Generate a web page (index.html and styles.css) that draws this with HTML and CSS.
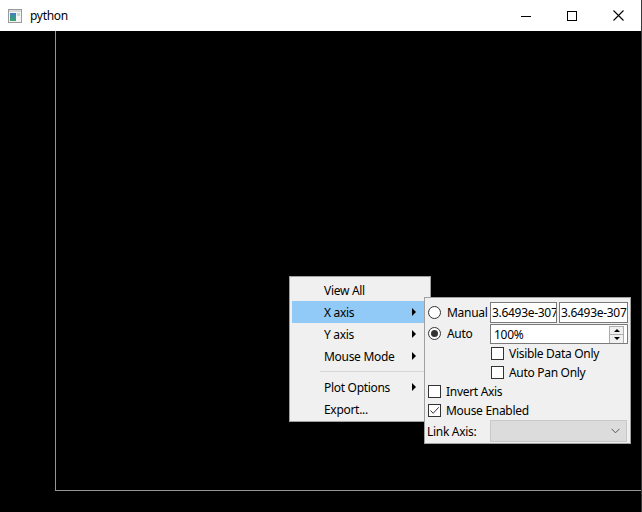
FILE: index.html
```html
<!DOCTYPE html>
<html lang="en">
<head>
  <meta charset="UTF-8">
  <title>python</title>
  <link rel="stylesheet" href="styles.css">
</head>
<body>
  <div class="window">
    <div class="titlebar">
      <svg class="app-icon" width="14" height="14" viewBox="0 0 14 14">
        <rect x="0.5" y="0.5" width="13" height="13" fill="#f4f4f4" stroke="#9a9a9a"/>
        <rect x="1" y="1" width="12" height="2" fill="#d8d8d8"/>
        <defs>
          <linearGradient id="g" x1="0" y1="0" x2="0" y2="1">
            <stop offset="0" stop-color="#3f7fc0"/>
            <stop offset="1" stop-color="#3aa56a"/>
          </linearGradient>
        </defs>
        <rect x="2" y="4" width="6" height="8" fill="url(#g)"/>
        <rect x="9" y="4" width="3" height="3" fill="#bfe0c8"/>
      </svg>
      <span class="title">python</span>
      <div class="controls">
        <div class="ctl"><svg width="10" height="10" viewBox="0 0 10 10"><path d="M0 5.5H10" stroke="#000" stroke-width="1"/></svg></div>
        <div class="ctl"><svg width="10" height="10" viewBox="0 0 10 10"><rect x="0.5" y="0.5" width="9" height="9" fill="none" stroke="#000"/></svg></div>
        <div class="ctl"><svg width="11" height="11" viewBox="0 0 11 11"><path d="M0.5 0.5L10.5 10.5M10.5 0.5L0.5 10.5" stroke="#000" stroke-width="1.1"/></svg></div>
      </div>
    </div>

    <div class="content">
      <div class="plot"></div>

      <!-- context menu -->
      <div class="menu">
        <div class="item">View All</div>
        <div class="item active">X axis<span class="arrow"></span></div>
        <div class="item">Y axis<span class="arrow"></span></div>
        <div class="item">Mouse Mode<span class="arrow"></span></div>
        <div class="sep"></div>
        <div class="item">Plot Options<span class="arrow"></span></div>
        <div class="item">Export...</div>
      </div>

      <!-- X axis sub panel -->
      <div class="sub">
        <div class="row r-manual">
          <label class="lead"><span class="radio"></span>Manual</label>
          <div class="field w1">3.6493e-307</div>
          <div class="field w2">3.6493e-307</div>
        </div>
        <div class="row r-auto">
          <label class="lead"><span class="radio on"></span>Auto</label>
          <div class="field spin">100%
            <div class="spin-btns">
              <span class="up"></span>
              <span class="down"></span>
            </div>
          </div>
        </div>
        <div class="row check indent"><span class="box"></span>Visible Data Only</div>
        <div class="row check indent"><span class="box"></span>Auto Pan Only</div>
        <div class="row check"><span class="box"></span>Invert Axis</div>
        <div class="row check"><span class="box on">
          <svg width="11" height="11" viewBox="0 0 11 11"><path d="M1.5 5.5L4.2 8.3L9.7 2.3" fill="none" stroke="#333" stroke-width="1"/></svg>
        </span>Mouse Enabled</div>
        <div class="row r-link">
          <span class="lead">Link Axis:</span>
          <div class="combo">
            <svg width="9" height="6" viewBox="0 0 9 6"><path d="M0.5 0.8L4.5 4.8L8.5 0.8" fill="none" stroke="#555" stroke-width="1"/></svg>
          </div>
        </div>
      </div>
    </div>
  </div>
</body>
</html>
```

FILE: styles.css
```css
html, body {
  margin: 0;
  padding: 0;
  background: #000;
}
body {
  width: 642px;
  height: 512px;
  overflow: hidden;
  font-family: "Noto Sans", "Open Sans", sans-serif;
  font-size: 12px;
  letter-spacing: -0.3px;
  color: #000;
}
.window {
  width: 642px;
  height: 512px;
  display: flex;
  flex-direction: column;
  box-sizing: border-box;
  border-right: 1px solid #3a3a3a;
}
.titlebar {
  height: 31px;
  flex: none;
  background: #fff;
  display: flex;
  align-items: center;
}
.app-icon {
  margin-left: 8px;
}
.title {
  margin-left: 8px;
  font-size: 12px;
  line-height: 31px;
}
.controls {
  margin-left: auto;
  display: flex;
  height: 31px;
}
.ctl {
  width: 46px;
  height: 31px;
  display: flex;
  align-items: center;
  justify-content: center;
}
.content {
  flex: 1;
  position: relative;
  background: #000;
}
.plot {
  margin-left: 55px;
  height: 459px;
  border-left: 1px solid #969696;
  border-bottom: 1px solid #969696;
}

/* popup menu */
.menu {
  position: absolute;
  left: 289px;
  top: 245px;
  width: 142px;
  box-sizing: border-box;
  background: #f0f0f0;
  border: 1px solid #a0a0a0;
  padding: 2px 2px 1px 2px;
}
.item {
  position: relative;
  height: 21px;
  line-height: 22px;
  padding: 1px 0 0 32px;
}
.item.active {
  background: #91c9f7;
}
.arrow {
  position: absolute;
  left: 120px;
  top: 7px;
  width: 0;
  height: 0;
  border-left: 4px solid #000;
  border-top: 4px solid transparent;
  border-bottom: 4px solid transparent;
}
.sep {
  height: 1px;
  background: #d7d7d7;
  margin: 4px 1px 4px 28px;
}

/* X axis panel */
.sub {
  position: absolute;
  left: 424px;
  top: 266px;
  width: 207px;
  box-sizing: border-box;
  background: #f0f0f0;
  border: 1px solid #a0a0a0;
  padding: 3px 2px 1px 2px;
}
.row {
  display: flex;
  align-items: center;
}
.lead {
  width: 63px;
  flex: none;
  display: flex;
  align-items: center;
}
.r-manual {
  height: 22px;
}
.r-auto {
  height: 21px;
}
.field {
  height: 21px;
  box-sizing: border-box;
  background: #fff;
  border: 1px solid #7a7a7a;
  line-height: 19px;
  padding-left: 1px;
  white-space: nowrap;
  overflow: hidden;
  font-size: 12px;
}
.w1 {
  width: 67px;
}
.w2 {
  width: 69px;
  margin-left: 2px;
}
.spin {
  width: 138px;
  height: 20px;
  position: relative;
  padding-left: 3px;
}
.spin-btns {
  position: absolute;
  right: 3px;
  top: 1px;
  width: 13px;
  height: 16px;
  border: 1px solid #adadad;
  background: #f0f0f0;
  display: flex;
  flex-direction: column;
}
.spin-btns span {
  flex: 1;
  display: flex;
  align-items: center;
  justify-content: center;
}
.spin-btns .up {
  border-bottom: 1px solid #adadad;
}
.spin-btns .up::after {
  content: "";
  border-left: 3px solid transparent;
  border-right: 3px solid transparent;
  border-bottom: 3px solid #000;
}
.spin-btns .down::after {
  content: "";
  border-left: 3px solid transparent;
  border-right: 3px solid transparent;
  border-top: 3px solid #000;
}
.radio {
  width: 13px;
  height: 13px;
  box-sizing: border-box;
  border: 1px solid #333;
  border-radius: 50%;
  background: #fff;
  margin: 0 6px 0 1px;
  display: flex;
  align-items: center;
  justify-content: center;
}
.radio.on::after {
  content: "";
  width: 7px;
  height: 7px;
  border-radius: 50%;
  background: #333;
}
.check {
  height: 19px;
}
.indent {
  padding-left: 63px;
}
.box {
  width: 13px;
  height: 13px;
  box-sizing: border-box;
  border: 1px solid #333;
  background: #fff;
  margin: 0 5px 0 1px;
  display: flex;
  align-items: center;
  justify-content: center;
}
.r-link {
  height: 22px;
}
.combo {
  width: 137px;
  height: 22px;
  box-sizing: border-box;
  border: 1px solid #c8c8c8;
  background: #dcdcdc;
  display: flex;
  align-items: center;
  justify-content: flex-end;
  padding-right: 6px;
}
```
